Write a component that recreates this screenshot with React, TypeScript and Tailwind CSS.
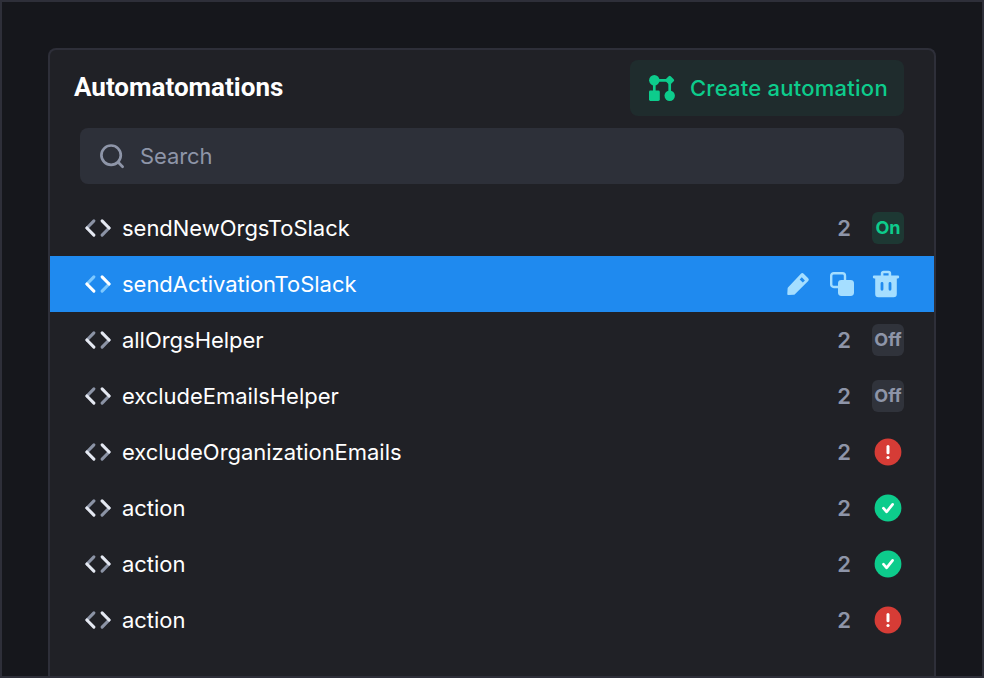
import clsx from "clsx";

type Status = "on" | "off" | "error" | "success";

type Automation = {
  name: string;
  count: number;
  status?: Status;
  selected?: boolean;
};

const automations: Automation[] = [
  { name: "sendNewOrgsToSlack", count: 2, status: "on" },
  { name: "sendActivationToSlack", count: 2, selected: true },
  { name: "allOrgsHelper", count: 2, status: "off" },
  { name: "excludeEmailsHelper", count: 2, status: "off" },
  { name: "excludeOrganizationEmails", count: 2, status: "error" },
  { name: "action", count: 2, status: "success" },
  { name: "action", count: 2, status: "success" },
  { name: "action", count: 2, status: "error" },
];

function FlowIcon() {
  return (
    <svg className="size-8" viewBox="0 0 32 32" fill="currentColor" aria-hidden="true">
      <path d="M8.3 8.3V24M8.3 8.3h15.4V24" fill="none" stroke="currentColor" strokeWidth="2.7" />
      <circle cx="8.3" cy="8.3" r="5.2" />
      <path d="M22.7 4.3a1.4 1.4 0 0 1 2 0l3 3a1.4 1.4 0 0 1 0 2l-3 3a1.4 1.4 0 0 1-2 0l-3-3a1.4 1.4 0 0 1 0-2z" />
      <rect x="3" y="18.6" width="10.8" height="10.4" rx="1.4" />
      <circle cx="23.7" cy="23.7" r="5.2" />
    </svg>
  );
}

function SearchIcon() {
  return (
    <svg className="size-7" viewBox="0 0 28 28" fill="none" stroke="currentColor" strokeWidth="2.7" strokeLinecap="round" aria-hidden="true">
      <circle cx="13.1" cy="13.2" r="9.7" />
      <path d="m20.2 20.3 4.4 4.4" />
    </svg>
  );
}

function CodeIcon({ selected }: { selected?: boolean }) {
  return (
    <svg className="h-8 w-7" viewBox="0 0 28 32" fill="none" strokeWidth="3.1" strokeLinecap="round" aria-hidden="true">
      <g className={selected ? "stroke-[#7cc8ff]" : "stroke-[#8b93a5]"}>
        <path d="M9.9 8.9 2.9 16" />
        <path d="M18.1 23.1 25.1 16" />
      </g>
      <g className={selected ? "stroke-white" : "stroke-[#e4e8f1]"}>
        <path d="M2.9 16 9.9 23.1" />
        <path d="M18.1 8.9 25.1 16" />
      </g>
    </svg>
  );
}

function PencilIcon() {
  return (
    <svg className="size-8" viewBox="0 0 32 32" fill="currentColor" aria-hidden="true">
      <path fillRule="evenodd" d="M18.9 5.8a2 2 0 0 1 2.8 0l4.5 4.5a2 2 0 0 1 0 2.8L12.9 26.2a2 2 0 0 1-1.3.6l-5.2.2a1 1 0 0 1-1.1-1.1l.3-5.3a2 2 0 0 1 .6-1.3zM19.8 9.3l-2.1 2.1 3.1 3.1 2.1-2.1z" />
    </svg>
  );
}

function CopyIcon() {
  return (
    <svg className="size-8" viewBox="0 0 32 32" aria-hidden="true">
      <rect x="5.2" y="5.2" width="13.8" height="13.8" rx="2.6" fill="none" stroke="currentColor" strokeWidth="2.4" />
      <rect x="12" y="12" width="16" height="16" rx="3.4" fill="currentColor" />
    </svg>
  );
}

function TrashIcon() {
  return (
    <svg className="size-8" viewBox="0 0 32 32" fill="currentColor" aria-hidden="true">
      <path d="M12.1 8V5.4a1.4 1.4 0 0 1 1.4-1.4h5a1.4 1.4 0 0 1 1.4 1.4V8" fill="none" stroke="currentColor" strokeWidth="2.6" />
      <rect x="2.8" y="7.6" width="26.4" height="2.8" rx="1.3" />
      <path fillRule="evenodd" d="M5.2 9h21.6v17a3.2 3.2 0 0 1-3.2 3.2H8.4A3.2 3.2 0 0 1 5.2 26zM12 14.1a1.4 1.4 0 0 0-1.4 1.4v5.8a1.4 1.4 0 0 0 2.8 0v-5.8a1.4 1.4 0 0 0-1.4-1.4zm8 0a1.4 1.4 0 0 0-1.4 1.4v5.8a1.4 1.4 0 0 0 2.8 0v-5.8a1.4 1.4 0 0 0-1.4-1.4z" />
    </svg>
  );
}

function StatusBadge({ status }: { status: Status }) {
  if (status === "on" || status === "off") {
    return (
      <span
        className={clsx(
          "flex size-8 items-center justify-center rounded-md pb-px text-[18px] font-bold",
          status === "on" ? "bg-[#1d3833] text-[#0dcc8c]" : "bg-[#30333b] text-[#8e95a8]",
        )}
      >
        {status === "on" ? "On" : "Off"}
      </span>
    );
  }

  return (
    <svg className="size-8" viewBox="0 0 32 32" fill="none" stroke="white" strokeWidth="2.7" strokeLinecap="round" strokeLinejoin="round" aria-hidden="true">
      <circle cx="16" cy="16" r="13.4" stroke="none" className={status === "error" ? "fill-[#d63c36]" : "fill-[#0dcc8c]"} />
      {status === "error" ? (
        <>
          <path d="M16 10.6v6.2" strokeWidth="3" />
          <circle cx="16" cy="21.5" r="1.6" fill="white" stroke="none" />
        </>
      ) : (
        <path d="m11.4 16.2 3.2 3.6 6-7.4" />
      )}
    </svg>
  );
}

function AutomationRow({ name, count, status, selected }: Automation) {
  return (
    <li className={clsx("flex h-14 items-center pr-[30px] pl-[34px]", selected && "bg-[#1f8aef]")}>
      <CodeIcon selected={selected} />
      <span className="ml-[10px] flex-1 text-[22px] tracking-[-0.03px] text-white">{name}</span>
      {selected ? (
        <div className="flex gap-3 pr-0.5 text-[#a5deff]">
          <PencilIcon />
          <CopyIcon />
          <TrashIcon />
        </div>
      ) : (
        <>
          <span className="mr-[21px] text-[22px] font-semibold text-[#8e95a8]">{count}</span>
          {status && <StatusBadge status={status} />}
        </>
      )}
    </li>
  );
}

export default function App() {
  return (
    <main className="h-[678px] w-[984px] overflow-hidden border-2 border-[#2e2f39] bg-[#16171c] px-[46px] pt-[46px] font-['Inter',sans-serif]">
      <section className="h-full overflow-hidden rounded-t-lg border-2 border-b-0 border-[#2e2f39] bg-[#202126]">
        <header className="flex items-start justify-between pt-[10px] pr-[30px] pl-6">
          <h1 className="pt-[9px] font-['Roboto',sans-serif] text-[26px] leading-9 font-bold text-white">
            Automatomations
          </h1>
          <button className="flex h-14 w-[274px] items-center gap-3 rounded-lg bg-[#1f2c2d] pl-4 text-[22px] font-medium tracking-[0.24px] whitespace-nowrap text-[#0dcc8c]">
            <FlowIcon />
            Create automation
          </button>
        </header>
        <div className="mx-[30px] mt-3 flex h-14 items-center gap-[14px] rounded-lg bg-[#2d3039] px-[18px] text-[22px] tracking-[-0.1px] text-[#8e95a8]">
          <SearchIcon />
          Search
        </div>
        <ul className="mt-4">
          {automations.map((automation, index) => (
            <AutomationRow key={index} {...automation} />
          ))}
        </ul>
      </section>
    </main>
  );
}
